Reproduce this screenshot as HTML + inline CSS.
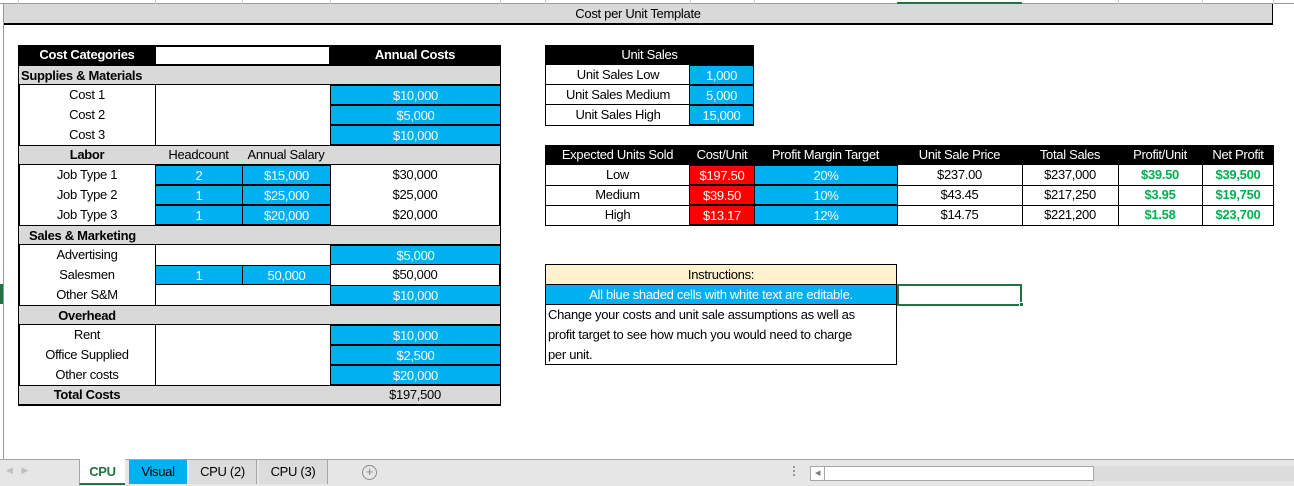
<!DOCTYPE html>
<html><head><meta charset="utf-8"><style>
*{margin:0;padding:0;box-sizing:border-box}
body{width:1294px;height:486px;position:relative;background:#fff;font-family:"Liberation Sans",sans-serif;font-size:13px;color:#000;overflow:hidden;letter-spacing:-0.3px}
.a{position:absolute}
.c{position:absolute;height:20px;line-height:20px;text-align:center;white-space:nowrap}
.b{background:#00b0f0;color:#fff;border:1px solid #000}
.k{background:#000;color:#fff}
.g{background:#d9d9d9;border-top:1px solid #000;border-bottom:1px solid #000}
.bd{font-weight:bold}
.r{background:#ff0000;color:#fff;border:1px solid #000}
.gr{color:#00b050;font-weight:bold}
.vl{position:absolute;width:1px;background:#000}
.hl{position:absolute;height:1px;background:#000}
</style></head><body>
<div class="a" style="left:0;top:0;width:1294px;height:4px;background:#fff;border-bottom:1px solid #9b9b9b"></div>
<div class="a" style="left:18px;top:0;width:1px;height:4px;background:#ccc"></div>
<div class="a" style="left:155px;top:0;width:1px;height:4px;background:#ccc"></div>
<div class="a" style="left:242px;top:0;width:1px;height:4px;background:#ccc"></div>
<div class="a" style="left:330px;top:0;width:1px;height:4px;background:#ccc"></div>
<div class="a" style="left:500px;top:0;width:1px;height:4px;background:#ccc"></div>
<div class="a" style="left:545px;top:0;width:1px;height:4px;background:#ccc"></div>
<div class="a" style="left:690px;top:0;width:1px;height:4px;background:#ccc"></div>
<div class="a" style="left:754px;top:0;width:1px;height:4px;background:#ccc"></div>
<div class="a" style="left:897px;top:2px;width:125px;height:3px;background:#217346"></div>
<div class="a" style="left:1118px;top:0;width:1px;height:4px;background:#ccc"></div>
<div class="a" style="left:1202px;top:0;width:1px;height:4px;background:#ccc"></div>
<div class="a" style="left:1273px;top:0;width:1px;height:4px;background:#ccc"></div>
<div class="a" style="left:0;top:4px;width:4px;height:455px;border-right:1px solid #9b9b9b"></div>
<div class="a" style="left:0;top:284px;width:3px;height:20px;background:#217346"></div>
<div class="c" style="left:4px;top:4px;width:1269px;height:21px;background:#d9d9d9;border-right:1px solid #000;border-bottom:2px solid #000;line-height:20px">Cost per Unit Template</div>

<div class="a" style="left:18px;top:45px;width:483px;height:361px;border:2px solid #000;border-bottom:3px double #000"></div>
<div class="c k bd" style="left:19px;top:45px;width:136px">Cost Categories</div>
<div class="c" style="left:155px;top:45px;width:175px;border:1px solid #000"></div>
<div class="c k bd" style="left:330px;top:45px;width:170px">Annual Costs</div>
<div class="c g bd" style="left:19px;top:65px;width:481px;text-align:left;padding-left:2px">Supplies &amp; Materials</div>
<div class="c" style="left:19px;top:85px;width:136px">Cost 1</div>
<div class="c" style="left:19px;top:105px;width:136px">Cost 2</div>
<div class="c" style="left:19px;top:125px;width:136px">Cost 3</div>
<div class="vl" style="left:155px;top:85px;height:60px"></div>
<div class="c b" style="left:330px;top:85px;width:171px">$10,000</div>
<div class="c b" style="left:330px;top:105px;width:171px">$5,000</div>
<div class="c b" style="left:330px;top:125px;width:171px">$10,000</div>
<div class="c g" style="left:19px;top:145px;width:481px"></div>
<div class="c bd" style="left:19px;top:145px;width:136px">Labor</div>
<div class="c" style="left:155px;top:145px;width:87px">Headcount</div>
<div class="c" style="left:242px;top:145px;width:88px">Annual Salary</div>
<div class="c" style="left:19px;top:165px;width:136px">Job Type 1</div>
<div class="c" style="left:19px;top:185px;width:136px">Job Type 2</div>
<div class="c" style="left:19px;top:205px;width:136px">Job Type 3</div>
<div class="c b" style="left:155px;top:165px;width:88px">2</div>
<div class="c b" style="left:155px;top:185px;width:88px">1</div>
<div class="c b" style="left:155px;top:205px;width:88px">1</div>
<div class="c b" style="left:242px;top:165px;width:89px">$15,000</div>
<div class="c b" style="left:242px;top:185px;width:89px">$25,000</div>
<div class="c b" style="left:242px;top:205px;width:89px">$20,000</div>
<div class="c" style="left:330px;top:165px;width:170px">$30,000</div>
<div class="c" style="left:330px;top:185px;width:170px">$25,000</div>
<div class="c" style="left:330px;top:205px;width:170px">$20,000</div>
<div class="c g bd" style="left:19px;top:225px;width:481px;text-align:left;padding-left:10px">Sales &amp; Marketing</div>
<div class="c" style="left:19px;top:245px;width:136px">Advertising</div>
<div class="c" style="left:19px;top:265px;width:136px">Salesmen</div>
<div class="c" style="left:19px;top:285px;width:136px">Other S&amp;M</div>
<div class="vl" style="left:155px;top:245px;height:60px"></div>
<div class="hl" style="left:155px;top:265px;width:175px"></div>
<div class="hl" style="left:155px;top:284px;width:175px"></div>
<div class="c b" style="left:330px;top:245px;width:171px">$5,000</div>
<div class="c b" style="left:155px;top:265px;width:88px">1</div>
<div class="c b" style="left:242px;top:265px;width:89px">50,000</div>
<div class="c" style="left:330px;top:265px;width:170px">$50,000</div>
<div class="c b" style="left:330px;top:285px;width:171px">$10,000</div>
<div class="c g bd" style="left:19px;top:305px;width:481px"><span style="position:absolute;left:0;width:136px;text-align:center">Overhead</span></div>
<div class="c" style="left:19px;top:325px;width:136px">Rent</div>
<div class="c" style="left:19px;top:345px;width:136px">Office Supplied</div>
<div class="c" style="left:19px;top:365px;width:136px">Other costs</div>
<div class="vl" style="left:155px;top:325px;height:60px"></div>
<div class="c b" style="left:330px;top:325px;width:171px">$10,000</div>
<div class="c b" style="left:330px;top:345px;width:171px">$2,500</div>
<div class="c b" style="left:330px;top:365px;width:171px">$20,000</div>
<div class="c g" style="left:19px;top:385px;width:481px"></div>
<div class="c bd" style="left:19px;top:385px;width:136px">Total Costs</div>
<div class="c" style="left:330px;top:385px;width:170px">$197,500</div>

<div class="a" style="left:545px;top:45px;width:209px;height:81px;border:1px solid #000"></div>
<div class="c k" style="left:545px;top:45px;width:209px">Unit Sales</div>
<div class="c" style="left:546px;top:65px;width:144px;border-bottom:1px solid #000">Unit Sales Low</div>
<div class="c" style="left:546px;top:85px;width:144px;border-bottom:1px solid #000">Unit Sales Medium</div>
<div class="c" style="left:546px;top:105px;width:144px">Unit Sales High</div>
<div class="c b" style="left:689px;top:65px;width:65px">1,000</div>
<div class="c b" style="left:689px;top:85px;width:65px">5,000</div>
<div class="c b" style="left:689px;top:105px;width:65px">15,000</div>

<div class="a" style="left:545px;top:145px;width:729px;height:81px;border:1px solid #000"></div>
<div class="c k" style="left:545px;top:145px;width:729px"></div>
<div class="c k" style="left:545px;top:145px;width:145px">Expected Units Sold</div>
<div class="c k" style="left:690px;top:145px;width:64px">Cost/Unit</div>
<div class="c k" style="left:754px;top:145px;width:143px">Profit Margin Target</div>
<div class="c k" style="left:897px;top:145px;width:125px">Unit Sale Price</div>
<div class="c k" style="left:1022px;top:145px;width:96px">Total Sales</div>
<div class="c k" style="left:1118px;top:145px;width:84px">Profit/Unit</div>
<div class="c k" style="left:1202px;top:145px;width:72px">Net Profit</div>
<div class="hl" style="left:545px;top:185px;width:729px"></div>
<div class="hl" style="left:545px;top:205px;width:729px"></div>
<div class="vl" style="left:897px;top:165px;height:60px"></div>
<div class="vl" style="left:1022px;top:165px;height:60px"></div>
<div class="vl" style="left:1118px;top:165px;height:60px"></div>
<div class="vl" style="left:1202px;top:165px;height:60px"></div>
<div class="c" style="left:545px;top:165px;width:145px">Low</div>
<div class="c" style="left:545px;top:185px;width:145px">Medium</div>
<div class="c" style="left:545px;top:205px;width:145px">High</div>
<div class="c r" style="left:689px;top:165px;width:66px">$197.50</div>
<div class="c r" style="left:689px;top:185px;width:66px">$39.50</div>
<div class="c r" style="left:689px;top:205px;width:66px">$13.17</div>
<div class="c b" style="left:754px;top:165px;width:144px">20%</div>
<div class="c b" style="left:754px;top:185px;width:144px">10%</div>
<div class="c b" style="left:754px;top:205px;width:144px">12%</div>
<div class="c" style="left:897px;top:165px;width:125px">$237.00</div>
<div class="c" style="left:897px;top:185px;width:125px">$43.45</div>
<div class="c" style="left:897px;top:205px;width:125px">$14.75</div>
<div class="c" style="left:1022px;top:165px;width:96px">$237,000</div>
<div class="c" style="left:1022px;top:185px;width:96px">$217,250</div>
<div class="c" style="left:1022px;top:205px;width:96px">$221,200</div>
<div class="c gr" style="left:1118px;top:165px;width:84px">$39.50</div>
<div class="c gr" style="left:1118px;top:185px;width:84px">$3.95</div>
<div class="c gr" style="left:1118px;top:205px;width:84px">$1.58</div>
<div class="c gr" style="left:1202px;top:165px;width:72px">$39,500</div>
<div class="c gr" style="left:1202px;top:185px;width:72px">$19,750</div>
<div class="c gr" style="left:1202px;top:205px;width:72px">$23,700</div>

<div class="a" style="left:545px;top:264px;width:352px;height:101px;border:1px solid #000"></div>
<div class="c" style="left:546px;top:265px;width:350px;background:#fff2cc">Instructions:</div>
<div class="c b" style="left:545px;top:284px;width:352px;height:21px">All blue shaded cells with white text are editable.</div>
<div class="a" style="left:548px;top:305px;width:348px;line-height:20px">Change your costs and unit sale assumptions as well as<br>profit target to see how much you would need to charge<br>per unit.</div>
<div class="a" style="left:897px;top:284px;width:125px;height:22px;border:2px solid #217346"></div>
<div class="a" style="left:1019px;top:302px;width:5px;height:5px;background:#217346;border:1px solid #fff"></div>

<div class="a" style="left:0;top:459px;width:1294px;height:27px;background:#e6e6e6;border-top:1px solid #a6a6a6"></div>
<div class="a" style="left:6px;top:465px;color:#c0c0c0;font-size:9px">&#9664;&nbsp;&nbsp;&nbsp;&nbsp;&#9654;</div>
<div class="c" style="left:79px;top:459px;width:46px;height:26px;background:#fff;border-left:1px solid #a6a6a6;border-bottom:2px solid #217346;color:#217346;font-weight:bold;line-height:25px">CPU</div>
<div class="c" style="left:129px;top:460px;width:58px;height:24px;background:#00b0f0;line-height:24px">Visual</div>
<div class="c" style="left:189px;top:460px;width:68px;height:24px;background:#dcdcdc;border-right:1px solid #a6a6a6;line-height:24px">CPU (2)</div>
<div class="c" style="left:259px;top:460px;width:69px;height:24px;background:#dcdcdc;border-right:1px solid #a6a6a6;line-height:24px">CPU (3)</div>
<div class="a" style="left:362px;top:465px;width:15px;height:15px;border:1px solid #8a8a8a;border-radius:50%;color:#8a8a8a;font-size:13px;line-height:12px;text-align:center">+</div>
<div class="a" style="left:793px;top:466px;width:2px;height:2px;background:#999;box-shadow:0 4px 0 #999,0 8px 0 #999"></div>
<div class="a" style="left:810px;top:466px;width:284px;height:15px;background:#fff;border:1px solid #a6a6a6"></div>
<div class="a" style="left:810px;top:466px;width:15px;height:15px;border:1px solid #a6a6a6;color:#777;font-size:7px;line-height:13px;text-align:center">&#9664;</div>
<div class="a" style="left:1094px;top:466px;width:200px;height:15px;background:#dcdcdc"></div>
</body></html>
